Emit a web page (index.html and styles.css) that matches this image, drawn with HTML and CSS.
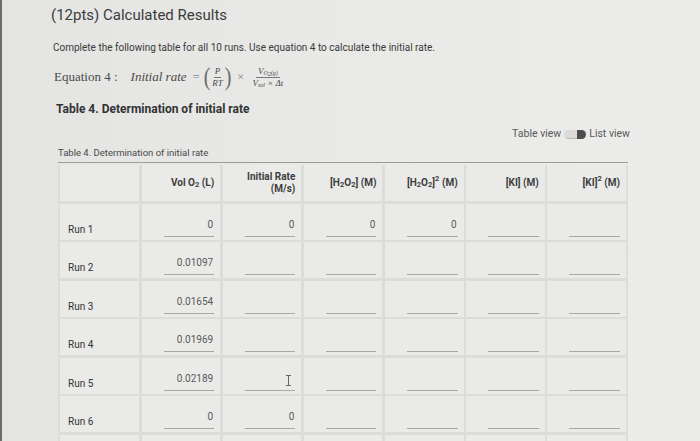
FILE: index.html
```html
<!DOCTYPE html>
<html lang="en">
<head>
  <meta charset="UTF-8">
  <title>Calculated Results</title>
  <link rel="stylesheet" href="styles.css">
</head>
<body>
  <div class="page">
    <h1 class="title">(12pts) Calculated Results</h1>
    <p class="intro">Complete the following table for all 10 runs. Use equation 4 to calculate the initial rate.</p>

    <div class="equation">
      <span class="eq-label">Equation 4 :</span>
      <span class="eq-name">Initial rate</span>
      <span class="eq-op">=</span>
      <span class="paren">(</span>
      <span class="frac"><span class="num">P</span><span class="den">RT</span></span>
      <span class="paren">)</span>
      <span class="eq-op times">&times;</span>
      <span class="frac frac-wide"><span class="num">V<sub>O<sub>2</sub>(g)</sub></span><span class="den">V<sub>sol</sub> &times; &Delta;t</span></span>
    </div>

    <h2 class="heading">Table 4. Determination of initial rate</h2>

    <div class="view-switch">
      <span>Table view</span>
      <span class="toggle"><span class="knob"></span></span>
      <span>List view</span>
    </div>

    <div class="caption">Table 4. Determination of initial rate</div>

    <div class="grid">
      <div class="cell head"></div>
      <div class="cell head">Vol O<sub>2</sub>&nbsp;(L)</div>
      <div class="cell head">Initial Rate<br>(M/s)</div>
      <div class="cell head">[H<sub>2</sub>O<sub>2</sub>]&nbsp;(M)</div>
      <div class="cell head">[H<sub>2</sub>O<sub>2</sub>]<sup>2</sup>&nbsp;(M)</div>
      <div class="cell head">[KI] (M)</div>
      <div class="cell head">[KI]<sup>2</sup>&nbsp;(M)</div>

      <div class="cell run">Run 1</div>
      <div class="cell"><div class="field">0</div></div>
      <div class="cell"><div class="field">0</div></div>
      <div class="cell"><div class="field">0</div></div>
      <div class="cell"><div class="field">0</div></div>
      <div class="cell"><div class="field"></div></div>
      <div class="cell"><div class="field"></div></div>

      <div class="cell run">Run 2</div>
      <div class="cell"><div class="field">0.01097</div></div>
      <div class="cell"><div class="field"></div></div>
      <div class="cell"><div class="field"></div></div>
      <div class="cell"><div class="field"></div></div>
      <div class="cell"><div class="field"></div></div>
      <div class="cell"><div class="field"></div></div>

      <div class="cell run">Run 3</div>
      <div class="cell"><div class="field">0.01654</div></div>
      <div class="cell"><div class="field"></div></div>
      <div class="cell"><div class="field"></div></div>
      <div class="cell"><div class="field"></div></div>
      <div class="cell"><div class="field"></div></div>
      <div class="cell"><div class="field"></div></div>

      <div class="cell run">Run 4</div>
      <div class="cell"><div class="field">0.01969</div></div>
      <div class="cell"><div class="field"></div></div>
      <div class="cell"><div class="field"></div></div>
      <div class="cell"><div class="field"></div></div>
      <div class="cell"><div class="field"></div></div>
      <div class="cell"><div class="field"></div></div>

      <div class="cell run">Run 5</div>
      <div class="cell"><div class="field">0.02189</div></div>
      <div class="cell"><div class="field">
        <svg class="ibeam" width="7" height="11" viewBox="0 0 7 11"><path d="M1 0.5h5M3.5 0.5v10M1 10.5h5" stroke="#666" stroke-width="1" fill="none"/></svg>
      </div></div>
      <div class="cell"><div class="field"></div></div>
      <div class="cell"><div class="field"></div></div>
      <div class="cell"><div class="field"></div></div>
      <div class="cell"><div class="field"></div></div>

      <div class="cell run">Run 6</div>
      <div class="cell"><div class="field">0</div></div>
      <div class="cell"><div class="field">0</div></div>
      <div class="cell"><div class="field"></div></div>
      <div class="cell"><div class="field"></div></div>
      <div class="cell"><div class="field"></div></div>
      <div class="cell"><div class="field"></div></div>

      <div class="cell run"></div>
      <div class="cell"></div>
      <div class="cell"></div>
      <div class="cell"></div>
      <div class="cell"></div>
      <div class="cell"></div>
      <div class="cell"></div>
    </div>
  </div>
</body>
</html>
```

FILE: styles.css
```css
/* reset */
* {
  margin: 0;
  padding: 0;
  box-sizing: border-box;
}

html, body {
  height: 441px;
  overflow: hidden;
}

body {
  font-family: Roboto, "Liberation Sans", sans-serif;
  color: #3a3a3a;
  background: linear-gradient(90deg, #e4e4e2 0%, #e9e9e7 50%, #ececea 100%);
  border-left: 2px solid #6c6c6c;
}

.page {
  padding: 5px 0 0 49px;
  width: 628px;
}

.title {
  font-size: 15px;
  font-weight: 400;
  color: #3c3c3c;
  line-height: 20px;
}

.intro {
  margin-top: 16px;
  font-size: 10px;
  line-height: 14px;
  padding-left: 2px;
}

/* equation line */
.equation {
  margin-top: 8px;
  padding-left: 3px;
  display: flex;
  align-items: center;
  height: 28px;
  font-family: "Liberation Serif", "DejaVu Serif", serif;
  font-size: 13px;
  color: #4a4a4a;
}

.eq-label {
  margin-right: 13px;
}

.eq-name {
  font-style: italic;
  margin-right: 3px;
}

.eq-op {
  color: #8a8a8a;
  margin: 0 3px;
}

.times {
  margin: 0 5px;
}

.paren {
  font-size: 25px;
  color: #6a6a6a;
  transform: scaleX(0.8);
  line-height: 28px;
}

.frac {
  display: inline-flex;
  flex-direction: column;
  align-items: center;
  font-size: 9px;
  font-style: italic;
  line-height: 11px;
  margin: 0 1px;
}

.frac .num {
  border-bottom: 1px solid #777;
  padding: 0 1px;
}

.frac-wide .num,
.frac-wide .den {
  padding: 0 2px;
}

.frac sub {
  font-size: 6px;
  vertical-align: -1px;
  line-height: 1;
}

.heading {
  margin-top: 10px;
  padding-left: 5px;
  font-size: 12px;
  font-weight: 700;
  color: #333;
  line-height: 16px;
}

/* table / list toggle */
.view-switch {
  margin-top: 10px;
  display: flex;
  justify-content: flex-end;
  align-items: center;
  gap: 2px;
  font-size: 10.5px;
  color: #5a5a5a;
  line-height: 14px;
}

.toggle {
  display: flex;
  justify-content: flex-end;
  width: 22px;
  height: 9px;
  border-radius: 5px;
  background: #dadad8;
  border-bottom: 1px solid #b8b8b6;
  margin: 0 1px;
}

.knob {
  width: 9px;
  height: 9px;
  border-radius: 0 5px 5px 0;
  background: #4e4e4e;
}

.caption {
  margin: 5px 2px 0 7px;
  padding: 0 0 3px 0;
  font-size: 9.5px;
  color: #4a4a4a;
  line-height: 13px;
  border-bottom: 1px solid #9c9c9a;
}

/* results grid */
.grid {
  margin: 2px 2px 0 7px;
  display: grid;
  grid-template-columns: 79px repeat(6, 1fr);
  grid-auto-rows: 36px;
  gap: 2.5px;
  background: #dcdcda;
  padding: 0 2px;
}

.cell {
  background: #eaeae8;
  display: flex;
  align-items: flex-end;
  justify-content: flex-end;
  padding: 0 6px 3px 22px;
}

.head {
  align-items: center;
  text-align: right;
  padding: 0 6px 0 6px;
  font-size: 10px;
  font-weight: 700;
  color: #3e3e3e;
  line-height: 12px;
}

.head sub,
.head sup {
  font-size: 7.5px;
  line-height: 1;
  vertical-align: baseline;
  position: relative;
}

.head sub {
  top: 2px;
}

.head sup {
  top: -4px;
}

.run {
  justify-content: flex-start;
  padding: 0 0 5px 8px;
  font-size: 10px;
  color: #333;
}

.field {
  width: 100%;
  height: 18px;
  border-bottom: 1px solid #a8a8a6;
  text-align: right;
  font-size: 10px;
  line-height: 12px;
  color: #5a5a5a;
  padding-right: 1px;
}

.ibeam {
  margin-right: 2px;
  margin-top: 2px;
}
```
